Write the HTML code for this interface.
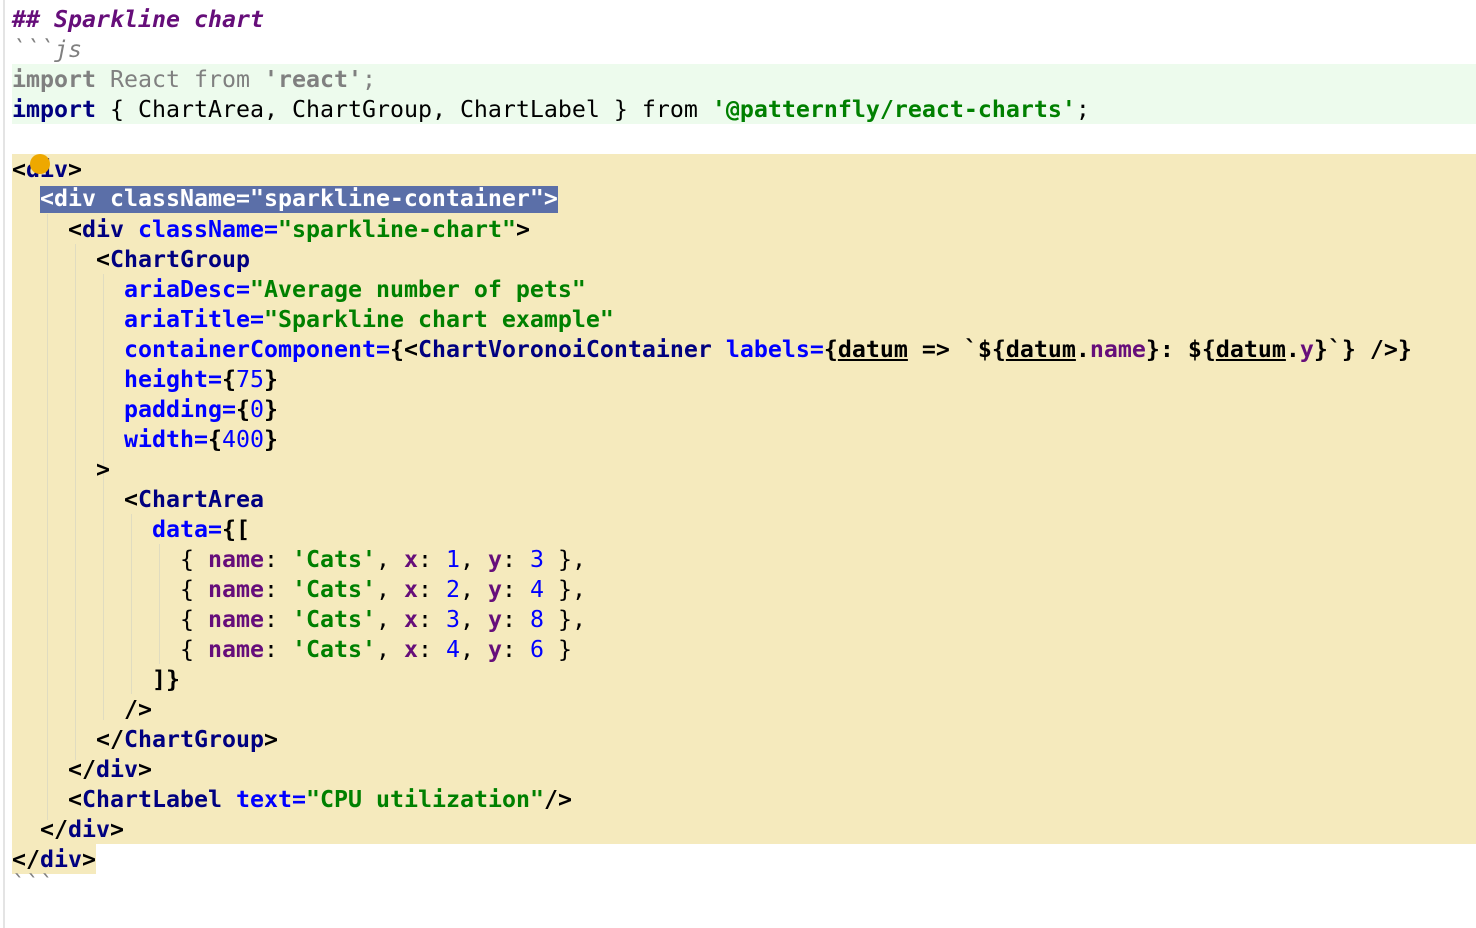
<!DOCTYPE html>
<html><head><meta charset="utf-8"><style>
html,body{margin:0;padding:0;background:#fff;width:1476px;height:928px;overflow:hidden}
.g{position:absolute;left:3px;top:0;width:2px;height:928px;background:#e4e4e4}
.bg{position:absolute}
.l{position:absolute;left:12px;height:30px;line-height:30px;white-space:pre;font-family:"DejaVu Sans Mono","Liberation Mono",monospace;font-size:23.25px;color:#000}
.t{color:#000080;font-weight:bold}
.a{color:#0000ff;font-weight:bold}
.s{color:#008000;font-weight:bold}
.p{color:#660e7a;font-weight:bold}
.n{color:#0000ff}
.k{color:#000080;font-weight:bold}
.gr{color:#808080}
.u{text-decoration:underline}
.ig{position:absolute;width:1px;background:#e0dcc0}
</style></head><body>
<div class="g"></div>
<div class="bg" style="left:12px;top:64px;width:1464px;height:60px;background:#edfbed"></div>
<div class="bg" style="left:12px;top:154px;width:1464px;height:690px;background:#f5eabd"></div>
<div class="bg" style="left:12px;top:844px;width:84px;height:30px;background:#f5eabd"></div>
<div class="bg" style="left:40px;top:186px;width:518px;height:27px;background:#5b6fa8"></div>
<div class="ig" style="left:47px;top:214px;height:606px"></div>
<div class="ig" style="left:75px;top:244px;height:516px"></div>
<div class="ig" style="left:103px;top:274px;height:446px"></div>
<div class="ig" style="left:131px;top:514px;height:180px"></div>
<div class="ig" style="left:159px;top:544px;height:120px"></div>

<div class="l" style="top:5px;color:#660e7a;font-weight:bold;font-style:italic">## Sparkline chart</div>
<div class="l gr" style="top:35px;font-style:italic">&#96;&#96;&#96;js</div>
<div class="l gr" style="top:65px"><b>import</b> React from <b>'react'</b>;</div>
<div class="l" style="top:95px"><span class="k">import</span> { ChartArea, ChartGroup, ChartLabel } from <span class="s">'@patternfly/react-charts'</span>;</div>
<div class="l" style="top:155px"><b>&lt;</b><span class="t">div</span><b>&gt;</b></div>
<div class="l" style="top:184px"><span style="color:#fff;font-weight:bold">  &lt;div className="sparkline-container"&gt;</span></div>
<div class="l" style="top:215px">    <b>&lt;</b><span class="t">div</span> <span class="a">className=</span><span class="s">"sparkline-chart"</span><b>&gt;</b></div>
<div class="l" style="top:245px">      <b>&lt;</b><span class="t">ChartGroup</span></div>
<div class="l" style="top:275px">        <span class="a">ariaDesc=</span><span class="s">"Average number of pets"</span></div>
<div class="l" style="top:305px">        <span class="a">ariaTitle=</span><span class="s">"Sparkline chart example"</span></div>
<div class="l" style="top:335px">        <span class="a">containerComponent=</span><b>{&lt;</b><span class="t">ChartVoronoiContainer</span> <span class="a">labels=</span><b>{<span class="u">datum</span> =&gt; &#96;${<span class="u">datum</span>.<span class="p">name</span>}: ${<span class="u">datum</span>.<span class="p">y</span>}&#96;} /&gt;}</b></div>
<div class="l" style="top:365px">        <span class="a">height=</span><b>{</b><span class="n">75</span><b>}</b></div>
<div class="l" style="top:395px">        <span class="a">padding=</span><b>{</b><span class="n">0</span><b>}</b></div>
<div class="l" style="top:425px">        <span class="a">width=</span><b>{</b><span class="n">400</span><b>}</b></div>
<div class="l" style="top:455px">      <b>&gt;</b></div>
<div class="l" style="top:485px">        <b>&lt;</b><span class="t">ChartArea</span></div>
<div class="l" style="top:515px">          <span class="a">data=</span><b>{[</b></div>
<div class="l" style="top:545px">            { <span class="p">name</span>: <span class="s">'Cats'</span>, <span class="p">x</span>: <span class="n">1</span>, <span class="p">y</span>: <span class="n">3</span> },</div>
<div class="l" style="top:575px">            { <span class="p">name</span>: <span class="s">'Cats'</span>, <span class="p">x</span>: <span class="n">2</span>, <span class="p">y</span>: <span class="n">4</span> },</div>
<div class="l" style="top:605px">            { <span class="p">name</span>: <span class="s">'Cats'</span>, <span class="p">x</span>: <span class="n">3</span>, <span class="p">y</span>: <span class="n">8</span> },</div>
<div class="l" style="top:635px">            { <span class="p">name</span>: <span class="s">'Cats'</span>, <span class="p">x</span>: <span class="n">4</span>, <span class="p">y</span>: <span class="n">6</span> }</div>
<div class="l" style="top:665px">          <b>]}</b></div>
<div class="l" style="top:695px">        <b>/&gt;</b></div>
<div class="l" style="top:725px">      <b>&lt;/</b><span class="t">ChartGroup</span><b>&gt;</b></div>
<div class="l" style="top:755px">    <b>&lt;/</b><span class="t">div</span><b>&gt;</b></div>
<div class="l" style="top:785px">    <b>&lt;</b><span class="t">ChartLabel</span> <span class="a">text=</span><span class="s">"CPU utilization"</span><b>/&gt;</b></div>
<div class="l" style="top:815px">  <b>&lt;/</b><span class="t">div</span><b>&gt;</b></div>
<div class="l" style="top:845px"><b>&lt;/</b><span class="t">div</span><b>&gt;</b></div>
<div class="l gr" style="top:870px">&#96;&#96;&#96;</div>
<div style="position:absolute;left:30px;top:154px;width:20px;height:20px;border-radius:50%;background:#eea800"></div>
</body></html>
